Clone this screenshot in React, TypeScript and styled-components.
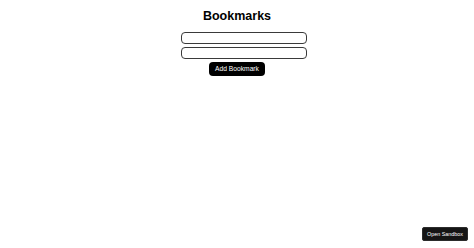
import React from "react";
import styled, { createGlobalStyle } from "styled-components";

const GlobalStyle = createGlobalStyle`
  html, body {
    margin: 0;
    padding: 0;
    background: #ffffff;
    font-family: "Liberation Sans", Arial, sans-serif;
  }
`;

const Page = styled.div`
  display: flex;
  flex-direction: column;
  align-items: center;
  padding-top: 8px;
`;

const Title = styled.h1`
  margin: 0 0 8px 0;
  font-size: 12.5px;
  line-height: 16px;
  font-weight: 700;
  color: #000;
`;

const Form = styled.form`
  display: flex;
  flex-direction: column;
  align-items: center;
  gap: 3px;
`;

const Field = styled.input`
  box-sizing: border-box;
  width: 126px;
  height: 12px;
  margin: 0 0 0 14px;
  padding: 0 3px;
  border: 1px solid #3a3a3a;
  border-radius: 4px;
  background: #fff;
  font-size: 7px;
  outline: none;
`;

const AddButton = styled.button`
  box-sizing: border-box;
  height: 14px;
  padding: 0 6px;
  margin: 0;
  border: none;
  border-radius: 4px;
  background: #000;
  color: #fff;
  font-family: "Liberation Sans", Arial, sans-serif;
  font-size: 6.7px;
  line-height: 14px;
  cursor: pointer;
`;

const SandboxButton = styled.a`
  position: fixed;
  right: 6px;
  bottom: 7px;
  box-sizing: border-box;
  height: 14px;
  padding: 0 4px;
  background: #151515;
  border: 1px solid #2c2c2c;
  border-radius: 2px;
  color: #fff;
  font-family: "Liberation Sans", Arial, sans-serif;
  font-size: 5.4px;
  line-height: 12px;
  text-decoration: none;
`;

export default function App() {
  return (
    <>
      <GlobalStyle />
      <Page>
        <Title>Bookmarks</Title>
        <Form onSubmit={(e) => e.preventDefault()}>
          <Field type="text" />
          <Field type="text" />
          <AddButton type="submit">Add Bookmark</AddButton>
        </Form>
      </Page>
      <SandboxButton href="#">Open Sandbox</SandboxButton>
    </>
  );
}
